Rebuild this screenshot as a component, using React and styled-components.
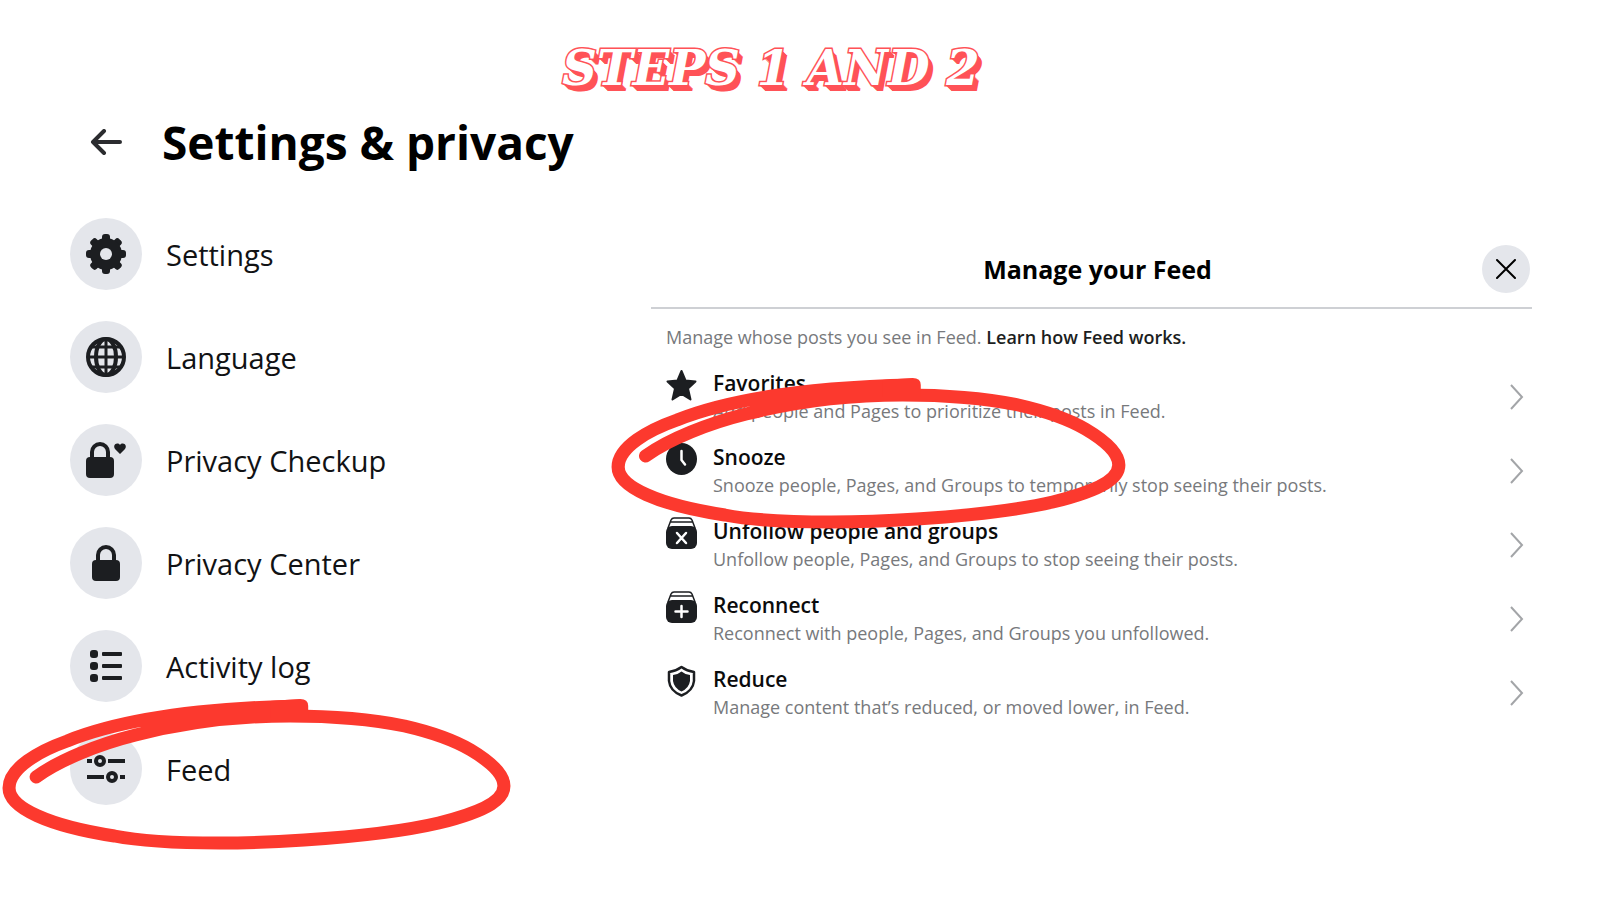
import React from 'react';

import styled, { createGlobalStyle } from 'styled-components';

const GlobalStyle = createGlobalStyle`
    * {
        box-sizing: border-box;
    }

    body {
        margin: 0;
        background: white;
        color: #0b0b0c;
        font-family: "Open Sans", "Noto Sans", sans-serif;
    }

    button {
        border: none;
        padding: 0;
        background: none;
        color: inherit;
        font: inherit;
        cursor: pointer;
    }

    svg {
        display: block;
    }
`;

const Page = styled.div`
    min-height: 100vh;
    overflow-x: hidden;
`;

const Banner = styled.header`
    padding: 40px 58px 4px 0;
    text-align: center;
`;

const BannerText = styled.h1`
    margin: 0;
    font-family: "DejaVu Serif", serif;
    font-size: 48px;
    font-style: italic;
    font-weight: 700;
    line-height: 56px;
    color: white;
    -webkit-text-stroke: 3px #ff5257;
    paint-order: stroke fill;
    text-shadow:
        1px 1px #ff5257,
        1px 2px #ff5257,
        2px 3px #ff5257,
        3px 4px #ff5257,
        4px 5px #ff5257,
        5px 6px #ff5257;
`;

const Content = styled.div`
    display: flex;
    align-items: flex-start;
    padding: 10px 68px 40px 70px;
`;

const Sidebar = styled.nav`
    flex: 0 0 581px;
`;

const SidebarHeader = styled.div`
    display: flex;
    align-items: center;
    gap: 20px;
    margin-bottom: 44px;
`;

const BackButton = styled.button`
    display: flex;
    align-items: center;
    justify-content: center;
    width: 72px;
    height: 64px;
`;

const SidebarTitle = styled.h2`
    margin: 0;
    font-size: 46px;
    font-weight: 700;
    line-height: 60px;
    color: black;
    white-space: nowrap;
`;

const MenuList = styled.ul`
    display: flex;
    flex-direction: column;
    gap: 31px;
    margin: 0;
    padding: 0;
    list-style: none;
`;

const MenuItem = styled.li`
    position: relative;
`;

const MenuLink = styled.a`
    display: flex;
    align-items: center;
    gap: 24px;
    color: #111214;
    font-size: 29px;
    text-decoration: none;
`;

const IconCircle = styled.span`
    display: flex;
    align-items: center;
    justify-content: center;
    width: 72px;
    height: 72px;
    border-radius: 50%;
    background: #e4e6eb;
`;

const Panel = styled.section`
    flex: 1;
    padding-top: 135px;
`;

const PanelHeader = styled.div`
    display: grid;
    grid-template-columns: 48px 1fr 48px;
    align-items: center;
    padding: 0 2px 14px;
    border-bottom: 2px solid #ced0d4;
`;

const PanelTitle = styled.h2`
    grid-column: 2;
    margin: 0;
    padding-left: 12px;
    font-size: 25px;
    font-weight: 700;
    line-height: 48px;
    text-align: center;
    color: black;
`;

const CloseButton = styled.button`
    display: flex;
    align-items: center;
    justify-content: center;
    width: 48px;
    height: 48px;
    border-radius: 50%;
    background: #e4e6eb;
`;

const Intro = styled.p`
    margin: 0;
    padding: 14px 15px 18px;
    font-size: 18px;
    line-height: 28px;
    color: #77797c;
`;

const IntroLink = styled.a`
    color: #1c1e21;
    font-weight: 600;
    text-decoration: none;
`;

const OptionList = styled.ul`
    display: flex;
    flex-direction: column;
    gap: 18px;
    margin: 0;
    padding: 0 4px 0 15px;
    list-style: none;
`;

const OptionItem = styled.li`
    position: relative;
`;

const OptionButton = styled.button`
    display: flex;
    align-items: center;
    gap: 16px;
    width: 100%;
    text-align: left;
`;

const OptionIcon = styled.span`
    align-self: flex-start;
`;

const OptionText = styled.span`
    flex: 1;
    display: flex;
    flex-direction: column;
`;

const OptionTitle = styled.span`
    font-size: 21px;
    font-weight: 600;
    line-height: 28px;
`;

const OptionDescription = styled.span`
    font-size: 18px;
    line-height: 28px;
    color: #77797c;
`;

// hand drawn ring that lies over the row it belongs to
const Ring = styled.svg`
    position: absolute;
    z-index: 1;
    top: ${(props) => props.$top};
    left: ${(props) => props.$left};
    width: ${(props) => props.$width};
    height: 160px;
    pointer-events: none;
`;

const DARK = '#1c1e21';

function Scribble({ top, left, width }) {
    return (
        <Ring $top={top} $left={left} $width={width} viewBox="0 0 516 160" preserveAspectRatio="none" aria-hidden="true">
            <path
                d="M37 81 C60 64 100 48 136 39 C190 25 240 20 290 20 C335 20 370 23 404 30 C430 36 453 44 470 54 C490 66 503 78 503 90 C503 102 490 114 438 127 C400 136 350 141 304 144 C260 147 240 147 220 147 C180 147 145 146 115 140 C50 130 10 112 10 92 C10 72 40 55 68 45 C125 22 210 12 299 10"
                fill="none"
                stroke="#fc392e"
                strokeWidth="13"
                strokeLinecap="round"
                strokeLinejoin="round"
            />
            <path d="M270 5L300 3Q308 3 308 10V22H270Z" fill="#fc392e" />
        </Ring>
    );
}

function GearIcon() {
    return (
        <svg width="40" height="40" viewBox="0 0 40 40">
            {[0, 45, 90, 135].map((angle) => (
                <rect key={angle} x="16" y="0" width="8" height="40" rx="3" fill={DARK} transform={`rotate(${angle} 20 20)`} />
            ))}
            <circle cx="20" cy="20" r="16" fill={DARK} />
            <circle cx="20" cy="20" r="6" fill="#e4e6eb" />
        </svg>
    );
}

function GlobeIcon() {
    return (
        <svg width="40" height="40" viewBox="0 0 40 40" fill="none" stroke={DARK} strokeWidth="4">
            <circle cx="20" cy="20" r="18" />
            <ellipse cx="20" cy="20" rx="10" ry="18" />
            <path d="M20 2V38M2 20H38M6 10H34M6 30H34" strokeWidth="3" />
        </svg>
    );
}

function LockIcon({ heart }) {
    return (
        <svg width="40" height="40" viewBox="0 0 40 40" fill={DARK}>
            <g transform={heart ? 'translate(-6 0)' : undefined}>
                <rect x="6" y="17" width="28" height="21" rx="4" />
                <path d="M12 19V12a8 8 0 0 1 16 0V19" fill="none" stroke={DARK} strokeWidth="4" />
            </g>
            {heart && <path d="M34 14L29 9C26 4 32 2 34 5C36 2 42 4 39 9Z" />}
        </svg>
    );
}

function ListIcon() {
    return (
        <svg width="40" height="40" viewBox="0 0 40 40" fill={DARK}>
            {[4, 16, 28].map((y) => (
                <g key={y}>
                    <rect x="4" y={y} width="8" height="8" rx="3" />
                    <rect x="16" y={y + 2} width="20" height="4" rx="1" />
                </g>
            ))}
        </svg>
    );
}

function SlidersIcon() {
    return (
        <svg width="40" height="40" viewBox="0 0 40 40" fill="none" stroke={DARK} strokeWidth="4">
            <circle cx="14" cy="12" r="4" />
            <circle cx="26" cy="28" r="4" />
            <path d="M1 12H6M22 12H39M1 28H18M34 28H39" />
        </svg>
    );
}

function StarIcon() {
    return (
        <svg width="31" height="32" viewBox="0 0 31 32">
            <path
                d="M15.500 2L19.500 11.500L29.500 12.500L22 19.500L24.500 30.500L15.500 25L6.500 30.500L9 19.500L1.500 12.500L11.500 11.500Z"
                fill={DARK}
                stroke={DARK}
                strokeWidth="2"
                strokeLinejoin="round"
            />
        </svg>
    );
}

function ClockIcon() {
    return (
        <svg width="31" height="32" viewBox="0 0 31 32">
            <ellipse cx="15.500" cy="16" rx="15.500" ry="16" fill={DARK} />
            <path d="M15.500 8V17L19 21.500" fill="none" stroke="white" strokeWidth="2.500" strokeLinecap="round" strokeLinejoin="round" />
        </svg>
    );
}

function StackIcon({ mark }) {
    return (
        <svg width="31" height="32" viewBox="0 0 31 32" fill="none">
            <path d="M8 1H23Q25 1 26 3L29 11H2L5 3Q6 1 8 1ZM4 5H27" stroke={DARK} strokeWidth="1.500" />
            <rect x="0" y="9" width="31" height="23" rx="6" fill={DARK} />
            <path d={mark} stroke="white" strokeWidth="2.500" strokeLinecap="round" />
        </svg>
    );
}

function ShieldIcon() {
    return (
        <svg width="31" height="32" viewBox="0 0 31 32">
            <path
                d="M15.500 2Q21 6 28 7V16Q27 26 15.500 30.500Q4 26 3 16V7Q10 6 15.500 2Z"
                fill="white"
                stroke={DARK}
                strokeWidth="2.500"
                strokeLinejoin="round"
            />
            <path d="M15.500 6.500Q19 9.500 24 10V16Q23 23 15.500 26.500Q8 23 7 16V10Q12 9.500 15.500 6.500Z" fill={DARK} />
        </svg>
    );
}

function Chevron() {
    return (
        <svg width="24" height="26" viewBox="0 0 24 26" fill="none" stroke="#a3a5a8" strokeWidth="2">
            <path d="M7 1L18 13L7 25" />
        </svg>
    );
}

const menu = [
    { label: 'Settings', icon: <GearIcon /> },
    { label: 'Language', icon: <GlobeIcon /> },
    { label: 'Privacy Checkup', icon: <LockIcon heart /> },
    { label: 'Privacy Center', icon: <LockIcon /> },
    { label: 'Activity log', icon: <ListIcon /> },
    { label: 'Feed', icon: <SlidersIcon />, circled: true },
];

const options = [
    {
        title: 'Favorites',
        description: 'Add people and Pages to prioritize their posts in Feed.',
        icon: <StarIcon />,
    },
    {
        title: 'Snooze',
        description: 'Snooze people, Pages, and Groups to temporarily stop seeing their posts.',
        icon: <ClockIcon />,
        circled: true,
    },
    {
        title: 'Unfollow people and groups',
        description: 'Unfollow people, Pages, and Groups to stop seeing their posts.',
        icon: <StackIcon mark="M11 16L20 26M20 16L11 26" />,
    },
    {
        title: 'Reconnect',
        description: 'Reconnect with people, Pages, and Groups you unfollowed.',
        icon: <StackIcon mark="M15.500 15V26M9.500 20.500H21.500" />,
    },
    {
        title: 'Reduce',
        description: 'Manage content that’s reduced, or moved lower, in Feed.',
        icon: <ShieldIcon />,
    },
];

function App() {
    return (
        <Page>
            <GlobalStyle />
            <Banner>
                <BannerText>STEPS 1 AND 2</BannerText>
            </Banner>

            <Content>
                <Sidebar>
                    <SidebarHeader>
                        <BackButton aria-label="Back">
                            <svg width="32" height="26" viewBox="0 0 32 26" fill="none" stroke="#2b2c2f" strokeWidth="4" strokeLinecap="round" strokeLinejoin="round">
                                <path d="M14 2L3 13L14 24M3 13H30" />
                            </svg>
                        </BackButton>
                        <SidebarTitle>Settings &amp; privacy</SidebarTitle>
                    </SidebarHeader>
                    <MenuList>
                        {menu.map((item) => (
                            <MenuItem key={item.label}>
                                <MenuLink href="#">
                                    <IconCircle>{item.icon}</IconCircle>
                                    {item.label}
                                </MenuLink>
                                {item.circled && <Scribble top="-37px" left="-71px" width="518px" />}
                            </MenuItem>
                        ))}
                    </MenuList>
                </Sidebar>

                <Panel>
                    <PanelHeader>
                        <PanelTitle>Manage your Feed</PanelTitle>
                        <CloseButton aria-label="Close">
                            <svg width="20" height="20" viewBox="0 0 20 20" stroke="black" strokeWidth="2" strokeLinecap="round">
                                <path d="M1 1L19 19M19 1L1 19" />
                            </svg>
                        </CloseButton>
                    </PanelHeader>
                    <Intro>
                        Manage whose posts you see in Feed. <IntroLink href="#">Learn how Feed works.</IntroLink>
                    </Intro>
                    <OptionList>
                        {options.map((option) => (
                            <OptionItem key={option.title}>
                                <OptionButton>
                                    <OptionIcon>{option.icon}</OptionIcon>
                                    <OptionText>
                                        <OptionTitle>{option.title}</OptionTitle>
                                        <OptionDescription>{option.description}</OptionDescription>
                                    </OptionText>
                                    <Chevron />
                                </OptionButton>
                                {option.circled && <Scribble top="-68px" left="-58px" width="524px" />}
                            </OptionItem>
                        ))}
                    </OptionList>
                </Panel>
            </Content>
        </Page>
    );
}

export default App;
